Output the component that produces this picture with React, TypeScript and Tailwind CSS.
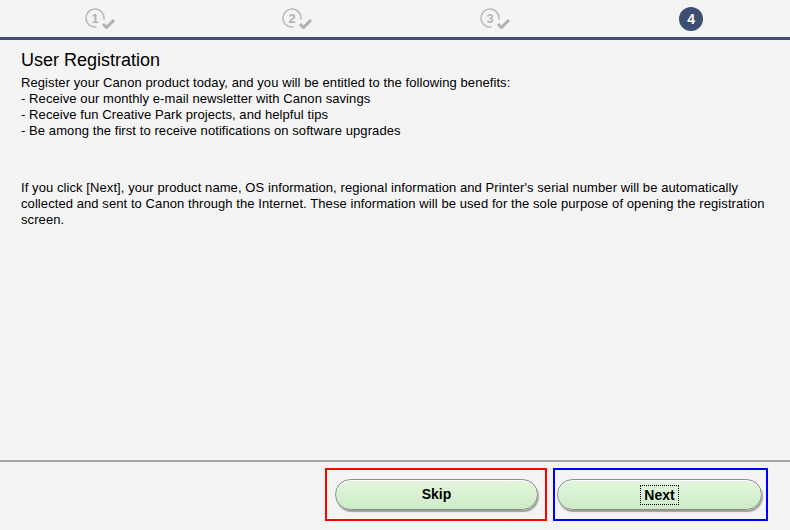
import React from "react";

function StepDone({ n }: { n: number }) {
  return (
    <svg width="32" height="26" viewBox="0 0 32 26" className="ml-[4px]">
      <path
        d="M 11.56 20.86 A 9 9 0 1 1 18.86 13.56"
        fill="none"
        stroke="#bcbcbc"
        strokeWidth="1.6"
      />
      <text
        x="10"
        y="16.5"
        textAnchor="middle"
        fontSize="13"
        fontWeight="bold"
        fill="#b4b4b4"
        fontFamily="'Liberation Sans', Arial, sans-serif"
      >
        {n}
      </text>
      <polyline
        points="18,18 21.5,21.5 29,14"
        fill="none"
        stroke="#b0b0b0"
        strokeWidth="3"
        strokeLinejoin="round"
      />
    </svg>
  );
}

export default function App() {
  return (
    <div
      className="w-[790px] h-[530px] bg-[#f4f4f4] flex flex-col text-black overflow-hidden"
      style={{ fontFamily: "'Liberation Sans', Arial, sans-serif" }}
    >
      <div className="h-[37px] grid grid-cols-4 items-center justify-items-center pt-[1px]">
        <StepDone n={1} />
        <StepDone n={2} />
        <StepDone n={3} />
        <div className="w-[24px] h-[24px] rounded-full bg-[#3c4f71] text-white text-[14px] font-bold flex items-center justify-center">
          4
        </div>
      </div>
      <div className="h-[3px] bg-[#3d5173]" />

      <div className="flex-1 px-[21px] pt-[9px]">
        <h1 className="text-[18px] leading-[22px] font-normal">User Registration</h1>
        <div className="mt-[4px] text-[13px] leading-[16px] tracking-[0.08px]">
          <p>Register your Canon product today, and you will be entitled to the following benefits:</p>
          <p>- Receive our monthly e-mail newsletter with Canon savings</p>
          <p>- Receive fun Creative Park projects, and helpful tips</p>
          <p>- Be among the first to receive notifications on software upgrades</p>
        </div>
        <div className="mt-[41px] text-[13px] leading-[16px] tracking-[0.08px] whitespace-nowrap">
          <p>
            If you click [Next], your product name, OS information, regional information and Printer's serial number will be automatically
            <br />
            collected and sent to Canon through the Internet. These information will be used for the sole purpose of opening the registration
            <br />
            screen.
          </p>
        </div>
      </div>

      <div className="h-px bg-[#fbfbfb]" />
      <div className="h-[2px] bg-[#a4a4a4]" />
      <div className="h-[68px] flex justify-end items-start pt-[6px] pr-[22px] gap-[6px]">
        <div className="w-[222px] h-[53px] border-2 border-[#ff0000] flex items-center pl-[8px]">
          <button className="w-[203px] h-[31px] rounded-full border border-[#8c8c8c] bg-gradient-to-b from-[#e4f6e0] to-[#ccecc6] shadow-[1px_2px_1px_rgba(0,0,0,0.35),inset_0_1px_0_#ffffff] text-[14px] font-bold flex items-center justify-center">
            Skip
          </button>
        </div>
        <div className="w-[215px] h-[53px] border-2 border-[#0000ff] flex items-center pl-[2px]">
          <button className="w-[205px] h-[31px] rounded-full border border-[#8c8c8c] bg-gradient-to-b from-[#e4f6e0] to-[#ccecc6] shadow-[1px_2px_1px_rgba(0,0,0,0.35),inset_0_1px_0_#ffffff] text-[14px] font-bold flex items-center justify-center">
            <span className="border border-dotted border-black px-[3px] leading-[18px]">Next</span>
          </button>
        </div>
      </div>
    </div>
  );
}
